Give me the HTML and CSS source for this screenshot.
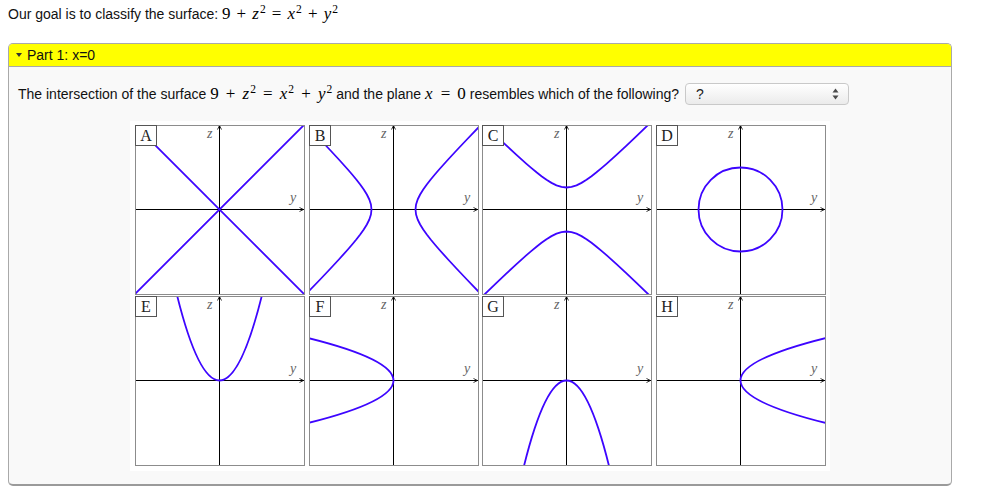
FILE: index.html
```html
<!DOCTYPE html>
<html>
<head>
<meta charset="utf-8">
<link rel="stylesheet" href="styles.css">
</head>
<body>
<p class="intro">Our goal is to classify the surface: <span class="math">9<span class="op">+</span><i>z</i><sup>2</sup><span class="op">=</span><i>x</i><sup>2</sup><span class="op">+</span><i>y</i><sup>2</sup></span></p>
<div class="panel">
  <div class="panel-head"><span class="caret"></span>Part 1: x=0</div>
  <div class="panel-body">
    <div class="question">
      <span class="qtext">The intersection of the surface <span class="math">9<span class="op">+</span><i>z</i><sup>2</sup><span class="op">=</span><i>x</i><sup>2</sup><span class="op">+</span><i>y</i><sup>2</sup></span> and the plane <span class="math"><i>x</i><span class="op">=</span>0</span> resembles which of the following?</span>
      <div class="select"><span>?</span><svg class="updown" width="7" height="12" viewBox="0 0 7 12"><path d="M3.5 0.5L6.5 4.5H0.5Z M3.5 11.5L0.5 7.5H6.5Z"/></svg></div>
    </div>
    <div class="figure">
      <svg class="plot" width="170" height="170" viewBox="0 0 170 170">
        <rect class="bg" x="0" y="0" width="170" height="170"/>
        <g transform="translate(84.5 84.5) scale(1 -1)">
          <path class="axis" d="M0,-85V85M-85,0H85"/>
          <path class="arrow" d="M-2,80L0,84L2,80M80,2L84,0L80,-2"/>
          <path class="curve" d="M-86,-86L86,86M-86,86L86,-86"/>
        </g>
        <text class="ax" x="72" y="13">z</text>
        <text class="ax" x="155" y="77">y</text>
        <rect class="frame" x="0.5" y="0.5" width="169" height="169"/>
        <rect class="tag" x="0.5" y="0.5" width="21" height="20"/>
        <text class="tag-t" x="11" y="16">A</text>
      </svg>
      <svg class="plot" width="170" height="170" viewBox="0 0 170 170">
        <rect class="bg" x="0" y="0" width="170" height="170"/>
        <g transform="translate(84.5 84.5) scale(1 -1)">
          <path class="axis" d="M0,-85V85M-85,0H85"/>
          <path class="arrow" d="M-2,80L0,84L2,80M80,2L84,0L80,-2"/>
          <path class="curve" d="M87.8,85L73.38,70L63.91,60L54.63,50L45.65,40L41.34,35L37.2,30L33.3,25L29.73,20L26.63,15L24.17,10L22.56,5L22,0L22.56,-5L24.17,-10L26.63,-15L29.73,-20L33.3,-25L37.2,-30L41.34,-35L45.65,-40L54.63,-50L63.91,-60L73.38,-70L87.8,-85"/>
          <path class="curve" d="M-87.8,85L-73.38,70L-63.91,60L-54.63,50L-45.65,40L-41.34,35L-37.2,30L-33.3,25L-29.73,20L-26.63,15L-24.17,10L-22.56,5L-22,0L-22.56,-5L-24.17,-10L-26.63,-15L-29.73,-20L-33.3,-25L-37.2,-30L-41.34,-35L-45.65,-40L-54.63,-50L-63.91,-60L-73.38,-70L-87.8,-85"/>
        </g>
        <text class="ax" x="72" y="13">z</text>
        <text class="ax" x="155" y="77">y</text>
        <rect class="frame" x="0.5" y="0.5" width="169" height="169"/>
        <rect class="tag" x="0.5" y="0.5" width="21" height="20"/>
        <text class="tag-t" x="11" y="16">B</text>
      </svg>
      <svg class="plot" width="170" height="170" viewBox="0 0 170 170">
        <rect class="bg" x="0" y="0" width="170" height="170"/>
        <g transform="translate(84.5 84.5) scale(1 -1)">
          <path class="axis" d="M0,-85V85M-85,0H85"/>
          <path class="arrow" d="M-2,80L0,84L2,80M80,2L84,0L80,-2"/>
          <path class="curve" d="M85,87.8L70,73.38L60,63.91L50,54.63L40,45.65L35,41.34L30,37.2L25,33.3L20,29.73L15,26.63L10,24.17L5,22.56L0,22L-5,22.56L-10,24.17L-15,26.63L-20,29.73L-25,33.3L-30,37.2L-35,41.34L-40,45.65L-50,54.63L-60,63.91L-70,73.38L-85,87.8"/>
          <path class="curve" d="M85,-87.8L70,-73.38L60,-63.91L50,-54.63L40,-45.65L35,-41.34L30,-37.2L25,-33.3L20,-29.73L15,-26.63L10,-24.17L5,-22.56L0,-22L-5,-22.56L-10,-24.17L-15,-26.63L-20,-29.73L-25,-33.3L-30,-37.2L-35,-41.34L-40,-45.65L-50,-54.63L-60,-63.91L-70,-73.38L-85,-87.8"/>
        </g>
        <text class="ax" x="72" y="13">z</text>
        <text class="ax" x="155" y="77">y</text>
        <rect class="frame" x="0.5" y="0.5" width="169" height="169"/>
        <rect class="tag" x="0.5" y="0.5" width="21" height="20"/>
        <text class="tag-t" x="11" y="16">C</text>
      </svg>
      <svg class="plot" width="170" height="170" viewBox="0 0 170 170">
        <rect class="bg" x="0" y="0" width="170" height="170"/>
        <g transform="translate(84.5 84.5) scale(1 -1)">
          <path class="axis" d="M0,-85V85M-85,0H85"/>
          <path class="arrow" d="M-2,80L0,84L2,80M80,2L84,0L80,-2"/>
          <circle class="curve" cx="0" cy="0" r="42"/>
        </g>
        <text class="ax" x="72" y="13">z</text>
        <text class="ax" x="155" y="77">y</text>
        <rect class="frame" x="0.5" y="0.5" width="169" height="169"/>
        <rect class="tag" x="0.5" y="0.5" width="21" height="20"/>
        <text class="tag-t" x="11" y="16">D</text>
      </svg>
      <svg class="plot" width="170" height="170" viewBox="0 0 170 170">
        <rect class="bg" x="0" y="0" width="170" height="170"/>
        <g transform="translate(84.5 84.5) scale(1 -1)">
          <path class="axis" d="M0,-85V85M-85,0H85"/>
          <path class="arrow" d="M-2,80L0,84L2,80M80,2L84,0L80,-2"/>
          <path class="curve" d="M-44,91.5Q0,-91.5 44,91.5"/>
        </g>
        <text class="ax" x="72" y="13">z</text>
        <text class="ax" x="155" y="77">y</text>
        <rect class="frame" x="0.5" y="0.5" width="169" height="169"/>
        <rect class="tag" x="0.5" y="0.5" width="21" height="20"/>
        <text class="tag-t" x="11" y="16">E</text>
      </svg>
      <svg class="plot" width="170" height="170" viewBox="0 0 170 170">
        <rect class="bg" x="0" y="0" width="170" height="170"/>
        <g transform="translate(84.5 84.5) scale(1 -1)">
          <path class="axis" d="M0,-85V85M-85,0H85"/>
          <path class="arrow" d="M-2,80L0,84L2,80M80,2L84,0L80,-2"/>
          <path class="curve" d="M-91.5,44Q91.5,0 -91.5,-44"/>
        </g>
        <text class="ax" x="72" y="13">z</text>
        <text class="ax" x="155" y="77">y</text>
        <rect class="frame" x="0.5" y="0.5" width="169" height="169"/>
        <rect class="tag" x="0.5" y="0.5" width="21" height="20"/>
        <text class="tag-t" x="11" y="16">F</text>
      </svg>
      <svg class="plot" width="170" height="170" viewBox="0 0 170 170">
        <rect class="bg" x="0" y="0" width="170" height="170"/>
        <g transform="translate(84.5 84.5) scale(1 -1)">
          <path class="axis" d="M0,-85V85M-85,0H85"/>
          <path class="arrow" d="M-2,80L0,84L2,80M80,2L84,0L80,-2"/>
          <path class="curve" d="M-44,-91.5Q0,91.5 44,-91.5"/>
        </g>
        <text class="ax" x="72" y="13">z</text>
        <text class="ax" x="155" y="77">y</text>
        <rect class="frame" x="0.5" y="0.5" width="169" height="169"/>
        <rect class="tag" x="0.5" y="0.5" width="21" height="20"/>
        <text class="tag-t" x="11" y="16">G</text>
      </svg>
      <svg class="plot" width="170" height="170" viewBox="0 0 170 170">
        <rect class="bg" x="0" y="0" width="170" height="170"/>
        <g transform="translate(84.5 84.5) scale(1 -1)">
          <path class="axis" d="M0,-85V85M-85,0H85"/>
          <path class="arrow" d="M-2,80L0,84L2,80M80,2L84,0L80,-2"/>
          <path class="curve" d="M91.5,44Q-91.5,0 91.5,-44"/>
        </g>
        <text class="ax" x="72" y="13">z</text>
        <text class="ax" x="155" y="77">y</text>
        <rect class="frame" x="0.5" y="0.5" width="169" height="169"/>
        <rect class="tag" x="0.5" y="0.5" width="21" height="20"/>
        <text class="tag-t" x="11" y="16">H</text>
      </svg>
    </div>
  </div>
</div>
</body>
</html>
```
FILE: styles.css
```css
html, body {
  margin: 0;
  background: #fff;
}
body {
  padding: 0 8px;
  font-family: "Liberation Sans", Arial, sans-serif;
  font-size: 14px;
  color: #111;
}
.intro {
  margin: 0 0 19px;
  padding-top: 4px;
  line-height: 20px;
  height: 20px;
}
.math {
  font-family: "Liberation Serif", "Times New Roman", serif;
  font-size: 17px;
  color: #000;
  white-space: nowrap;
}
.math i {
  font-style: italic;
  padding-right: 1px;
}
.math sup {
  font-size: 0.68em;
  line-height: 0;
  vertical-align: 0.5em;
}
.math .op {
  margin: 0 0.36em;
}
.qtext .math .op {
  margin: 0 0.42em;
}
.panel {
  width: 944px;
  box-sizing: border-box;
  border: 1px solid #a9a9a9;
  border-bottom: 2px solid #9a9a9a;
  border-radius: 5px;
  background: #f9f9f9;
  overflow: hidden;
}
.panel-head {
  height: 22px;
  line-height: 22px;
  background: #ffff00;
  border-bottom: 1px solid #a9a9a9;
  padding-left: 7px;
  display: flex;
  align-items: center;
}
.caret {
  width: 0;
  height: 0;
  border-left: 3px solid transparent;
  border-right: 3px solid transparent;
  border-top: 4px solid #333;
  margin-right: 5px;
}
.panel-body {
  padding: 16px 9px 13px;
}
.question {
  display: flex;
  align-items: center;
  height: 22px;
  gap: 6px;
}
.select {
  width: 164px;
  height: 22px;
  box-sizing: border-box;
  border: 1px solid #c9c9c9;
  border-radius: 4px;
  background: linear-gradient(#ffffff, #ebebeb);
  display: flex;
  align-items: center;
  justify-content: space-between;
  padding: 0 9px 0 10px;
  font-size: 14px;
  color: #222;
}
.updown path {
  fill: #4a4a4a;
}
.figure {
  width: 700px;
  height: 350px;
  box-sizing: border-box;
  margin: 16px auto 0;
  padding: 4px 4px 5px 5px;
  background: #fff;
  display: grid;
  grid-template-columns: repeat(4, 170px);
  grid-auto-rows: 170px;
  column-gap: 3.5px;
  row-gap: 1px;
}
.plot {
  display: block;
}
.plot .bg {
  fill: #fff;
}
.plot .frame {
  fill: none;
  stroke: #8c8c8c;
  stroke-width: 1;
}
.plot .axis {
  fill: none;
  stroke: #000;
  stroke-width: 1;
}
.plot .arrow {
  fill: none;
  stroke: #000;
  stroke-width: 0.8;
}
.plot .curve {
  fill: none;
  stroke: #3d05ff;
  stroke-width: 1.8;
  stroke-linejoin: round;
}
.plot .ax {
  font-family: "Liberation Serif", "Times New Roman", serif;
  font-style: italic;
  font-size: 14px;
  fill: #666;
}
.plot .tag {
  fill: #fff;
  stroke: #555;
  stroke-width: 1;
}
.plot .tag-t {
  font-family: "Liberation Serif", "Times New Roman", serif;
  font-size: 16px;
  fill: #222;
  text-anchor: middle;
}
```
